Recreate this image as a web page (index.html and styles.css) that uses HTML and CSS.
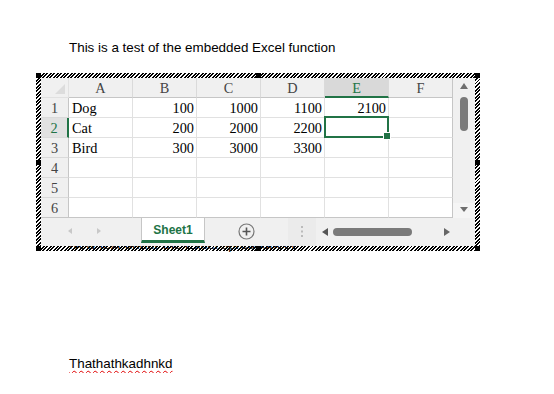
FILE: index.html
```html
<!DOCTYPE html>
<html lang="en">
<head>
<meta charset="utf-8">
<title>Embedded Excel test</title>
<link rel="stylesheet" href="styles.css">
</head>
<body>
<div class="doc">
  <p class="line intro">This is a test of the embedded Excel function</p>

  <div class="ole">
    <div class="book">
      <div class="sheet-area">
        <div class="grid">
          <div class="corner"><svg width="10" height="10" viewBox="0 0 10 10"><path d="M10 0 L10 10 L0 10 Z" fill="#dcdcdc"/></svg></div>
          <div class="ch">A</div>
          <div class="ch">B</div>
          <div class="ch">C</div>
          <div class="ch">D</div>
          <div class="ch on">E</div>
          <div class="ch">F</div>

          <div class="rh">1</div>
          <div class="c">Dog</div>
          <div class="c n">100</div>
          <div class="c n">1000</div>
          <div class="c n">1100</div>
          <div class="c n">2100</div>
          <div class="c"></div>

          <div class="rh on">2</div>
          <div class="c">Cat</div>
          <div class="c n">200</div>
          <div class="c n">2000</div>
          <div class="c n">2200</div>
          <div class="c sel"></div>
          <div class="c"></div>

          <div class="rh">3</div>
          <div class="c">Bird</div>
          <div class="c n">300</div>
          <div class="c n">3000</div>
          <div class="c n">3300</div>
          <div class="c"></div>
          <div class="c"></div>

          <div class="rh">4</div>
          <div class="c"></div><div class="c"></div><div class="c"></div><div class="c"></div><div class="c"></div><div class="c"></div>
          <div class="rh">5</div>
          <div class="c"></div><div class="c"></div><div class="c"></div><div class="c"></div><div class="c"></div><div class="c"></div>
          <div class="rh">6</div>
          <div class="c"></div><div class="c"></div><div class="c"></div><div class="c"></div><div class="c"></div><div class="c"></div>
        </div>

        <div class="vscroll">
          <svg class="v-up" width="8" height="6" viewBox="0 0 8 6"><path d="M4 0 L8 6 L0 6 Z" fill="#6e6e6e"/></svg>
          <div class="v-thumb"></div>
          <div class="v-down"><svg width="8" height="5" viewBox="0 0 8 5"><path d="M0 0 L8 0 L4 5 Z" fill="#6e6e6e"/></svg></div>
        </div>
      </div>

      <div class="tabbar">
        <div class="tab-nav">
          <svg width="4" height="6" viewBox="0 0 4 6"><path d="M4 0 L4 6 L0 3 Z" fill="#c8c8c8"/></svg>
          <svg width="4" height="6" viewBox="0 0 4 6"><path d="M0 0 L4 3 L0 6 Z" fill="#c8c8c8"/></svg>
        </div>
        <div class="sheet-tab">Sheet1</div>
        <div class="add-sheet">
          <svg width="17" height="17" viewBox="0 0 17 17">
            <circle cx="8.5" cy="8.5" r="7.5" fill="none" stroke="#777" stroke-width="1.2"/>
            <path d="M8.5 4.5 V12.5 M4.5 8.5 H12.5" stroke="#555" stroke-width="1.6"/>
          </svg>
        </div>
        <div class="split">
          <svg width="2" height="11" viewBox="0 0 2 11">
            <rect x="0" y="0" width="2" height="2" fill="#bbb"/>
            <rect x="0" y="4.5" width="2" height="2" fill="#bbb"/>
            <rect x="0" y="9" width="2" height="2" fill="#bbb"/>
          </svg>
        </div>
        <div class="hscroll">
          <svg width="6" height="8" viewBox="0 0 6 8"><path d="M6 0 L6 8 L0 4 Z" fill="#555"/></svg>
          <div class="h-thumb"></div>
          <svg width="6" height="8" viewBox="0 0 6 8"><path d="M0 0 L6 4 L0 8 Z" fill="#666"/></svg>
        </div>
        <div class="tab-corner"></div>
      </div>
    </div>

    <span class="handle tl"></span>
    <span class="handle tm"></span>
    <span class="handle tr"></span>
    <span class="handle ml"></span>
    <span class="handle mr"></span>
    <span class="handle bl"></span>
    <span class="handle bm"></span>
    <span class="handle br"></span>
  </div>

  <p class="line under">New text under the Excel spreadsheet</p>
  <p class="line typo"><span class="spell">Thathathkadhnkd</span></p>
</div>
</body>
</html>
```

FILE: styles.css
```css
:root {
  --green: #217346;
  --head-bg: #f0f0f0;
  --head-line: #c6c6c6;
  --cell-line: #e1e1e1;
}
* {
  box-sizing: border-box;
}
body {
  margin: 0;
  background: #fff;
  color: #000;
  font-family: "Liberation Sans", Arial, sans-serif;
}
.doc {
  padding: 39px 0 0 69px;
}
.line {
  margin: 0;
  font-size: 13.4px;
  line-height: 18px;
  white-space: nowrap;
}
.under {
  margin-top: -15px;
}
.typo {
  margin-top: 101px;
}
.spell {
  text-decoration: underline wavy #e00000;
  text-decoration-thickness: 1px;
  text-underline-offset: 2px;
}

/* embedded object frame */
.ole {
  position: relative;
  z-index: 1;
  width: 444px;
  margin: 16px 0 0 -33px;
  padding: 5px;
  background: repeating-linear-gradient(135deg, #000 0 1.4px, transparent 1.4px 2.5px);
}
.handle {
  position: absolute;
  width: 5px;
  height: 5px;
  background: #000;
}
.tl { top: 0; left: 0; }
.tm { top: 0; left: 220px; }
.tr { top: 0; right: 0; }
.ml { top: 87px; left: 0; }
.mr { top: 87px; right: 0; }
.bl { bottom: 0; left: 0; }
.bm { bottom: 0; left: 220px; }
.br { bottom: 0; right: 0; }

.book {
  background: var(--head-bg);
  height: 168px;
  display: flex;
  flex-direction: column;
}
.sheet-area {
  display: flex;
  height: 140px;
}

/* cell grid */
.grid {
  display: grid;
  grid-template-columns: 28px repeat(6, 64px);
  grid-auto-rows: 20px;
  background: #fff;
  font-family: "Liberation Serif", "Times New Roman", serif;
  font-size: 14.3px;
  line-height: 17px;
}
.grid > div {
  border-right: 1px solid var(--cell-line);
  border-bottom: 1px solid var(--cell-line);
  padding-top: 2px;
  white-space: nowrap;
}
.grid > div:nth-child(7n) {
  border-right-color: var(--head-line);
}
.grid > div:nth-last-child(-n+7) {
  border-bottom-color: var(--head-line);
}
.corner {
  background: var(--head-bg);
  display: flex;
  justify-content: flex-end;
  align-items: flex-end;
  padding: 0 3px 3px 0;
}
.corner svg {
  display: block;
}
.ch {
  background: var(--head-bg);
  color: #444;
  text-align: center;
}
.grid > .ch {
  border-right-color: #dadada;
  border-bottom-color: var(--head-line);
}
.ch.on {
  background: #d9d9d9;
  color: var(--green);
}
.grid > .ch.on {
  border-bottom: 2px solid var(--green);
}
.rh {
  background: var(--head-bg);
  color: #444;
  text-align: center;
}
.grid > .rh {
  border-right-color: var(--head-line);
  border-bottom-color: #dadada;
}
.rh.on {
  background: #e1e1e1;
  color: var(--green);
}
.grid > .rh.on {
  border-right: 2px solid var(--green);
}
.c {
  padding-left: 3px;
  padding-right: 2px;
}
.c.n {
  text-align: right;
}
.c.sel {
  position: relative;
}
.c.sel::after {
  content: "";
  position: absolute;
  inset: -2px -1px -1px -1px;
  border: 2px solid var(--green);
}
.c.sel::before {
  content: "";
  position: absolute;
  z-index: 1;
  right: -3px;
  bottom: -3px;
  width: 6px;
  height: 6px;
  background: var(--green);
  border: 1px solid #fff;
}

/* vertical scrollbar */
.vscroll {
  width: 22px;
  display: flex;
  flex-direction: column;
  align-items: center;
  padding-top: 5px;
}
.v-up {
  display: block;
}
.v-thumb {
  width: 8px;
  height: 34px;
  margin-top: 8px;
  border-radius: 4px;
  background: #7a7a7a;
}
.v-down {
  margin-top: auto;
  width: 22px;
  height: 15px;
  display: flex;
  justify-content: center;
  padding-top: 4px;
  background: #f5f5f5;
}
.v-down svg {
  display: block;
}

/* sheet tabs and horizontal scrollbar */
.tabbar {
  display: flex;
  height: 28px;
  align-items: flex-start;
}
.tab-nav {
  width: 100px;
  height: 28px;
  display: flex;
  align-items: center;
  gap: 25px;
  padding: 0 0 2px 27px;
}
.tab-nav svg {
  display: block;
}
.sheet-tab {
  width: 64px;
  height: 25px;
  padding-top: 2px;
  background: #fff;
  border-left: 1px solid var(--head-line);
  border-right: 1px solid var(--head-line);
  border-bottom: 3px solid var(--green);
  color: var(--green);
  font-weight: bold;
  font-size: 12px;
  line-height: 20px;
  text-align: center;
}
.add-sheet {
  width: 83px;
  height: 28px;
  display: flex;
  justify-content: center;
  align-items: center;
  padding-bottom: 1px;
}
.add-sheet svg {
  display: block;
}
.split {
  width: 28px;
  height: 28px;
  display: flex;
  justify-content: center;
  align-items: center;
  padding-bottom: 1px;
  background: #ebebeb;
}
.hscroll {
  width: 137px;
  height: 28px;
  display: flex;
  align-items: center;
  padding: 0 3px 1px 6px;
}
.hscroll svg {
  display: block;
}
.h-thumb {
  width: 79px;
  height: 8px;
  margin: 0 32px 0 5px;
  border-radius: 4px;
  background: #7a7a7a;
}
.tab-corner {
  width: 22px;
  height: 28px;
}
```
